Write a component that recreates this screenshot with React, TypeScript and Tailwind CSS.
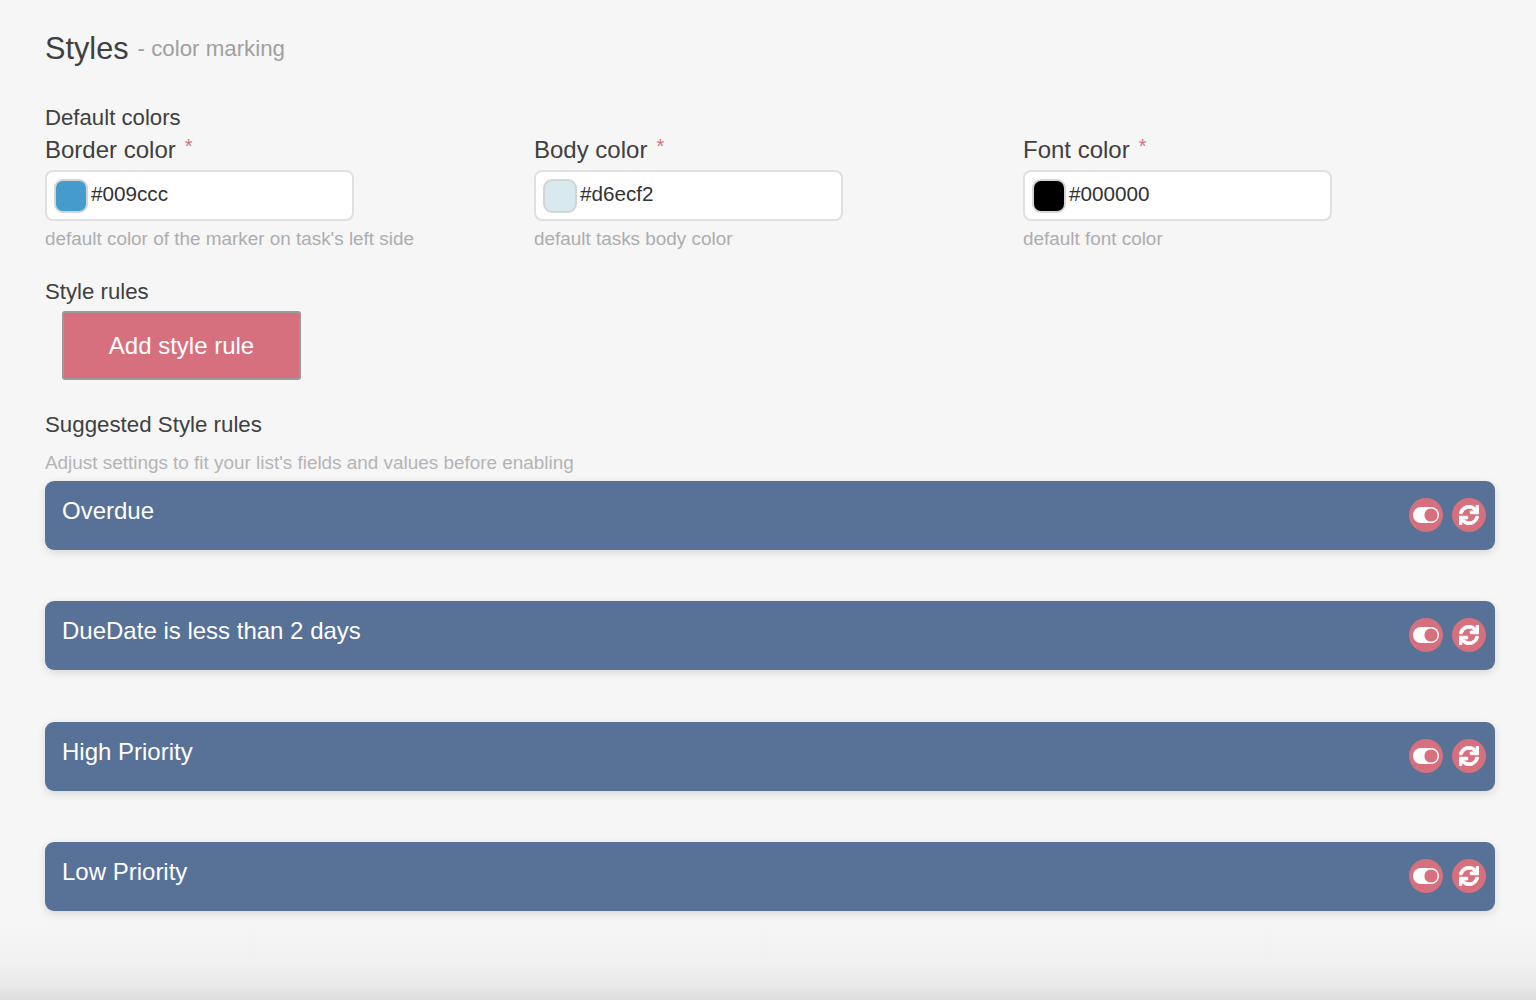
import { FaSync } from "react-icons/fa";

const fields = [
  { label: "Border color", value: "#009ccc", swatch: "bg-[#439ccb]", help: "default color of the marker on task's left side" },
  { label: "Body color", value: "#d6ecf2", swatch: "bg-[#d9e9f0]", help: "default tasks body color" },
  { label: "Font color", value: "#000000", swatch: "bg-black", help: "default font color" },
];

const rules = ["Overdue", "DueDate is less than 2 days", "High Priority", "Low Priority"];

function ToggleIcon() {
  return (
    <svg width="26" height="16" viewBox="0 0 26 16">
      <rect x="0" y="0" width="26" height="16" rx="8" fill="#ffffff" />
      <circle cx="18" cy="8" r="6.6" fill="#d6707f" />
    </svg>
  );
}

export default function App() {
  return (
    <div className="h-[1000px] overflow-hidden bg-[linear-gradient(to_bottom,#f6f6f6_0,#f6f6f6_920px,#f1f1f1_960px,#e9e9e9_985px,#dedede_1000px)] pl-[45px] pr-[41px] pt-[30px] font-['Liberation_Sans',Arial,sans-serif] text-[#404040]">
      <div className="flex h-[38px] items-center">
        <span className="text-[30.7px] leading-[38px]">Styles</span>
        <span className="ml-[9px] text-[22.3px] leading-[38px] text-[#a0a0a0]">- color marking</span>
      </div>

      <div className="mt-[35px] text-[22.2px] leading-[30px]">Default colors</div>

      <div className="grid grid-cols-[489px_489px_1fr]">
        {fields.map((f) => (
          <div key={f.label}>
            <div className="flex h-[34px] items-start text-[24px] leading-[34px]">
              <span>{f.label}</span>
              <span className="ml-[9px] text-[20px] leading-[26px] text-[#d9707f]">*</span>
            </div>
            <div className="mt-[3px] flex h-[51px] w-[309px] items-center rounded-[8px] border-2 border-[#e0e0e0] bg-white pl-[7px]">
              <div className={`h-[34px] w-[34px] shrink-0 rounded-[9px] border-2 border-[#d4d4d4] ${f.swatch}`} />
              <span className="ml-[3px] mb-[3px] text-[20.7px] leading-[26px] text-[#333333]">{f.value}</span>
            </div>
            <div className="mt-[5px] text-[18.9px] leading-[26px] text-[#adadb0]">{f.help}</div>
          </div>
        ))}
      </div>

      <div className="mt-[25px] text-[22.2px] leading-[30px]">Style rules</div>
      <button className="ml-[17px] mt-[4px] flex h-[69px] w-[239px] items-center justify-center rounded-[3px] border-2 border-[#9a9a9a] bg-[#d6707f] text-[24px] text-white">
        Add style rule
      </button>

      <div className="mt-[30px] text-[22.3px] leading-[30px]">Suggested Style rules</div>
      <div className="mt-[10px] text-[18.9px] leading-[26px] text-[#b4b4b7]">Adjust settings to fit your list's fields and values before enabling</div>

      <div className="mt-[5px] flex flex-col gap-[51.4px]">
        {rules.map((r) => (
          <div key={r} className="flex h-[69px] items-center justify-between rounded-[9px] bg-[#587197] pl-[17px] pr-[9px] shadow-[0_3px_8px_rgba(0,0,0,0.12)]">
            <span className="mb-[9px] text-[24px] leading-[30px] text-white">{r}</span>
            <div className="mb-[1px] flex items-center gap-[9px]">
              <div className="flex h-[34px] w-[34px] items-center justify-center rounded-full bg-[#d6707f]">
                <ToggleIcon />
              </div>
              <div className="flex h-[34px] w-[34px] items-center justify-center rounded-full bg-[#d6707f] text-white">
                <FaSync size={20} stroke="currentColor" strokeWidth={24} />
              </div>
            </div>
          </div>
        ))}
      </div>
    </div>
  );
}
